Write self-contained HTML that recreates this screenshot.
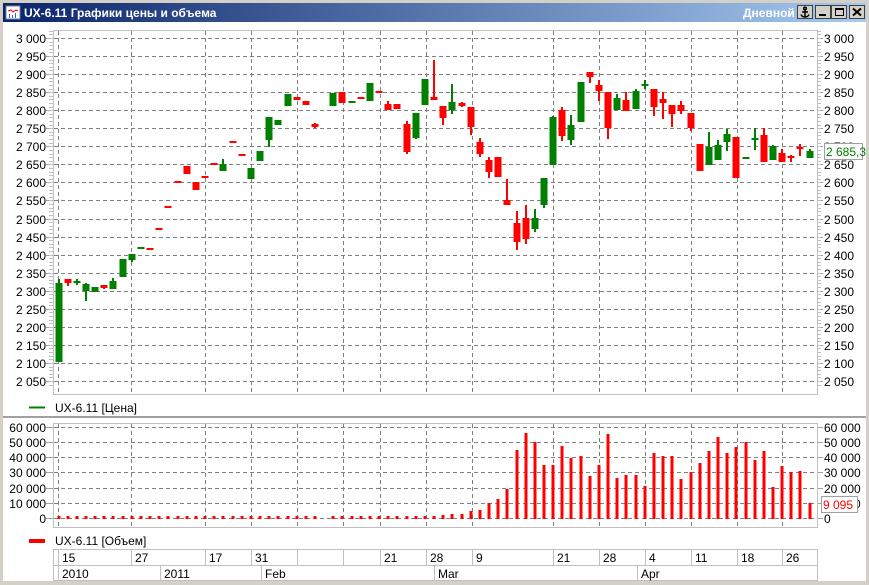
<!DOCTYPE html>
<html><head><meta charset="utf-8"><style>
html,body{margin:0;padding:0;background:#d4d0c8;}
svg{display:block;font-family:"Liberation Sans",sans-serif;}
</style></head><body>
<svg id="s" width="869" height="585" xmlns="http://www.w3.org/2000/svg">
<defs><linearGradient id="tg" x1="0" x2="1"><stop offset="0" stop-color="#0a246a"/><stop offset="1" stop-color="#a6caf0"/></linearGradient></defs>
<rect x="0" y="0" width="869" height="585" fill="#d4d0c8"/>
<rect x="3" y="3" width="863" height="19" fill="url(#tg)"/>
<rect x="6" y="6" width="14" height="13" fill="#fff" stroke="#6a7da8"/>
<polyline points="8,11 11,10 13,12 16,10 18,11" fill="none" stroke="#f00"/>
<rect x="9" y="14" width="1" height="4" fill="#36c"/><rect x="12" y="15" width="1" height="3" fill="#36c"/><rect x="15" y="13" width="1" height="5" fill="#36c"/>
<text x="24" y="17" font-size="12" font-weight="bold" fill="#fff">UX-6.11 Графики цены и объема</text>
<text x="743" y="17" font-size="12" font-weight="bold" fill="#fff">Дневной</text>
<g fill="#d4d0c8" stroke="#404040">
<rect x="797.5" y="5.5" width="15" height="13"/><rect x="815.5" y="5.5" width="15" height="13"/><rect x="831.5" y="5.5" width="15" height="13"/><rect x="849.5" y="5.5" width="15" height="13"/></g>
<g stroke="#000" stroke-width="1.5" fill="none"><circle cx="805" cy="8.5" r="1.3"/><line x1="805" y1="10" x2="805" y2="17"/><line x1="802" y1="12" x2="808" y2="12"/><path d="M801 14.5 Q802 17 805 17 Q808 17 809 14.5"/></g>
<rect x="819" y="14" width="7" height="2" fill="#000"/>
<rect x="835.5" y="8.5" width="8" height="7" fill="none" stroke="#000"/><rect x="835" y="8" width="9" height="2" fill="#000"/>
<path d="M853 8.5 L861 15.5 M861 8.5 L853 15.5" stroke="#000" stroke-width="2"/>
<rect x="3" y="22" width="863" height="559" fill="#fff"/>
<rect x="53.5" y="30.5" width="764" height="364" fill="#fff" stroke="#c0c0c0"/>
<rect x="53.5" y="423.5" width="764" height="104" fill="#fff" stroke="#c0c0c0"/>
<rect x="3" y="416" width="863" height="2" fill="#a0a0a0"/>
<g id="g"></g>
<line x1="29" y1="407.5" x2="45" y2="407.5" stroke="#008000" stroke-width="2"/>
<text x="55" y="412" font-size="12">UX-6.11 [Цена]</text>
<line x1="29" y1="541" x2="45" y2="541" stroke="#f00" stroke-width="4"/>
<text x="55" y="545" font-size="12">UX-6.11 [Объем]</text>
<rect x="824.5" y="143.5" width="38" height="16" fill="#fff" stroke="#a0a0a0"/>
<text x="826" y="156" font-size="12" fill="#008000">2 685,3</text>
<rect x="821.5" y="496.5" width="36" height="16" fill="#fff" stroke="#a0a0a0"/>
<text x="823" y="509" font-size="12" fill="#f00">9 095</text>
<g stroke="#c0c0c0" fill="none">
<rect x="53.5" y="549.5" width="764" height="31"/><line x1="53" y1="565.5" x2="817" y2="565.5"/></g>
<g id="d" font-size="12"></g>
</svg>
<script>
(function(){
var NS="http://www.w3.org/2000/svg",g=document.getElementById('g'),d=document.getElementById('d');
function el(p,t,a,tx){var e=document.createElementNS(NS,t);for(var k in a)e.setAttribute(k,a[k]);if(tx!=null)e.textContent=tx;p.appendChild(e);return e;}
var vx=[58,131,205,251,297,343,380,426,472,553,599,645,691,737,782];
vx.forEach(function(x){el(g,'line',{x1:x+.5,y1:31,x2:x+.5,y2:394,stroke:'#808080','stroke-dasharray':'4,3'});el(g,'line',{x1:x+.5,y1:424,x2:x+.5,y2:527,stroke:'#808080','stroke-dasharray':'4,3'});});
function py(p){return 38+(3000-p)*0.361;}
for(var p=3000;p>=2050;p-=50){var y=Math.round(py(p))+.5;el(g,'line',{x1:54,y1:y,x2:817,y2:y,stroke:'#808080','stroke-dasharray':'4,3'});
var s=(p/1000|0)+' '+String(p%1000).padStart(3,'0');el(g,'text',{x:46,y:y+4.5,'font-size':12,'text-anchor':'end'},s);el(g,'text',{x:824,y:y+4.5,'font-size':12},s);
el(g,'line',{x1:46,y1:y,x2:53,y2:y,stroke:'#a0a0a0'});el(g,'line',{x1:818,y1:y,x2:823,y2:y,stroke:'#a0a0a0'});}
for(var p=3020;p>=2040;p-=10){var y=Math.round(py(p))+.5;el(g,'line',{x1:49,y1:y,x2:53,y2:y,stroke:'#c0c0c0'});el(g,'line',{x1:818,y1:y,x2:821,y2:y,stroke:'#c0c0c0'});}
function vy(v){return 518-v*0.001517;}
for(var v=0;v<=60000;v+=10000){var y=Math.round(vy(v))+.5;el(g,'line',{x1:54,y1:y,x2:817,y2:y,stroke:'#808080','stroke-dasharray':'4,3'});
var s=v==0?'0':(v/1000)+' 000';el(g,'text',{x:46,y:y+4.5,'font-size':12,'text-anchor':'end'},s);el(g,'text',{x:824,y:y+4.5,'font-size':12},s);
el(g,'line',{x1:46,y1:y,x2:53,y2:y,stroke:'#a0a0a0'});el(g,'line',{x1:818,y1:y,x2:823,y2:y,stroke:'#a0a0a0'});}
var C=[[0,'G',283,362,279,362],[1,'R',279,283,279,286],[2,'G',281,283,279,285],[3,'G',284,291,283,301],[4,'G',287,292],[5,'R',285,288,285,289],[6,'G',281,289,278,289],[7,'G',259,277],[8,'G',254,260,254,262],[9,'G',247,249],[10,'R',248,250],[11,'R',228,230],[12,'R',206,208],[13,'R',181,183],[14,'R',166,174],[15,'R',182,190],[16,'R',176,178],[17,'R',163,165],[18,'G',164,171,159,171],[19,'R',141,143],[20,'R',154,156],[21,'G',168,179],[22,'G',151,161],[23,'G',117,140,117,147],[24,'G',120,125],[25,'G',94,106],[26,'R',97,100],[27,'R',101,105],[28,'R',124,127,123,128],[30,'G',93,106],[31,'R',92,103],[32,'G',101,102],[33,'R',97,98],[34,'G',83,101],[35,'R',91,93],
[36,'R',104,110,101,110],[37,'R',104,109],[38,'R',124,152,121,154],[39,'G',113,138,113,139],[40,'G',79,105],[41,'R',97,100,60,100],[42,'R',106,118,106,125],[43,'G',102,110,84,114],[44,'R',103,106,102,107],[45,'R',107,127,107,135],[46,'R',142,154,138,157],[47,'R',160,172,157,178],[48,'R',157,177],[49,'R',200,205,179,205],[50,'R',223,242,211,250],[51,'R',218,239,205,244],[52,'G',218,229,209,232],[53,'G',178,205,178,208],[54,'G',117,165,116,165],[55,'R',110,136,107,141],[56,'G',125,140,115,145],[57,'G',82,122],[58,'R',72,77,72,83],[59,'R',85,91,80,101],[60,'R',92,128,92,139],[61,'G',98,110,94,110],[62,'R',100,111,92,111],[63,'G',91,109,89,109],[64,'G',84,86,80,89],[65,'R',89,107,89,116],[66,'R',99,103,92,119],[67,'R',105,114,105,127],[68,'R',105,111,101,114],[69,'R',113,128,113,131],[70,'R',144,171],[71,'G',147,165,132,165],[72,'G',145,160,140,160],[73,'G',134,142,129,151],[74,'R',137,178],[75,'G',157,159],[76,'G',138,140,128,150],[77,'R',135,162,128,162],[78,'G',146,160,145,160],[79,'R',153,162,149,162],[80,'R',156,158,155,162],[81,'R',147,149,144,156],[82,'G',151,158,149,158]];
function cx(i){return 58.5+i*9.16;}
C.forEach(function(c){var x=cx(c[0]),col=c[1]=='G'?'#008000':'#ff0000';
if(c[4]!=null)el(g,'rect',{x:Math.round(x)-1,y:c[4],width:2,height:c[5]-c[4],fill:col});
el(g,'rect',{x:Math.round(x)-3.5,y:c[2],width:7,height:Math.max(2,c[3]-c[2]),fill:col});});
var V={42:515,43:514,44:514,45:511,46:510,47:503,48:499,49:489,50:450,51:433,52:442,53:465,54:465,55:446,56:458,57:456,58:476,59:465,60:434,61:478,62:475,63:475,64:486,65:453,66:456,67:456,68:479,69:472,70:463,71:451,72:437,73:453,74:447,75:442,76:460,77:451,78:487,79:466,80:472,81:471,82:503};
for(var i=0;i<83;i++){if(i==29)continue;var x=Math.round(cx(i));var t=V[i]||516;el(g,'rect',{x:x-1.5,y:t,width:3,height:519-t,fill:'#f00'});if(!V[i])el(g,'rect',{x:x-1,y:517,width:2,height:2,fill:'#f00'});}
var tops=[[58,'15'],[131,'27'],[205,'17'],[251,'31'],[297,''],[343,''],[380,'21'],[426,'28'],[472,'9'],[553,'21'],[599,'28'],[645,'4'],[691,'11'],[737,'18'],[782,'26']];
tops.forEach(function(t){el(d,'line',{x1:t[0]+.5,y1:550,x2:t[0]+.5,y2:565,stroke:'#c0c0c0'});el(d,'text',{x:t[0]+4,y:562},t[1]);});
[[58,'2010'],[160,'2011'],[261,'Feb'],[434,'Mar'],[637,'Apr']].forEach(function(t){el(d,'line',{x1:t[0]+.5,y1:566,x2:t[0]+.5,y2:581,stroke:'#c0c0c0'});el(d,'text',{x:t[0]+4,y:578},t[1]);});
})();
</script>
</body></html>
